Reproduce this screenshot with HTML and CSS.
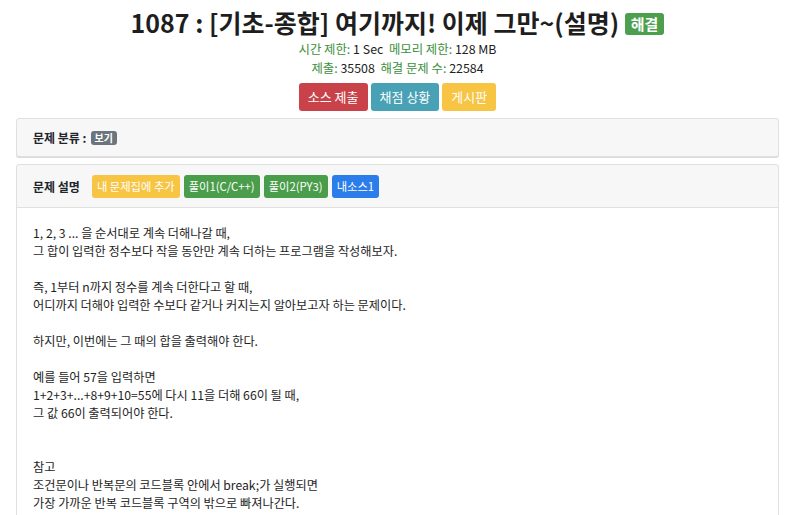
FILE: index.html
```html
<!DOCTYPE html>
<html>
	<head>
		<meta charset="UTF-8">
		<title>1087 : [기초-종합] 여기까지! 이제 그만~(설명)</title>
		<link rel="stylesheet" href="styles.css">
	</head>
	<body>
		<div class="wrap">
			<h1 class="title">1087 : [기초-종합] 여기까지! 이제 그만~(설명) <span class="solved">해결</span></h1>
			<p class="meta"><span class="lab">시간 제한:</span> 1 Sec &nbsp;<span class="lab">메모리 제한:</span> 128 MB</p>
			<p class="meta"><span class="lab">제출:</span> 35508 &nbsp;<span class="lab">해결 문제 수:</span> 22584</p>
			<div class="actions">
				<a href="javascript:;" class="btn red">소스 제출</a>
				<a href="javascript:;" class="btn teal">채점 상황</a>
				<a href="javascript:;" class="btn yellow">게시판</a>
			</div>

			<div class="card">
				<div class="card-head">
					<b>문제 분류 :</b> <span class="tag">보기</span>
				</div>
			</div>

			<div class="card">
				<div class="card-head line">
					<b>문제 설명</b>
					<a href="javascript:;" class="sbtn yellow">내 문제집에 추가</a>
					<a href="javascript:;" class="sbtn green">풀이1(C/C++)</a>
					<a href="javascript:;" class="sbtn green">풀이2(PY3)</a>
					<a href="javascript:;" class="sbtn blue">내소스1</a>
				</div>
				<div class="card-body">
					1, 2, 3 ... 을 순서대로 계속 더해나갈 때,<br>
					그 합이 입력한 정수보다 작을 동안만 계속 더하는 프로그램을 작성해보자.<br>
					<br>
					즉, 1부터 n까지 정수를 계속 더한다고 할 때,<br>
					어디까지 더해야 입력한 수보다 같거나 커지는지 알아보고자 하는 문제이다.<br>
					<br>
					하지만, 이번에는 그 때의 합을 출력해야 한다.<br>
					<br>
					예를 들어 57을 입력하면<br>
					1+2+3+...+8+9+10=55에 다시 11을 더해 66이 될 때,<br>
					그 값 66이 출력되어야 한다.<br>
					<br>
					<br>
					참고<br>
					조건문이나 반복문의 코드블록 안에서 break;가 실행되면<br>
					가장 가까운 반복 코드블록 구역의 밖으로 빠져나간다.
				</div>
			</div>
		</div>
	</body>
</html>
```

FILE: styles.css
```css
*{ margin: 0; padding: 0; box-sizing: border-box;}
body{ background: #fff; color: #212529; font-family: "Noto Sans CJK KR", "Noto Sans", sans-serif; font-size: 12px;}
a{ text-decoration: none;}
.wrap{ width: 763px; margin-left: 16px; padding-top: 4px;}
.title{ text-align: center; font-size: 25px; font-weight: 700; line-height: 36px; color: #1e1e1e;}
.solved{ display: inline-block; vertical-align: 3px; background: #4c9f4c; color: #fff; font-size: 15px; line-height: 22px; padding: 0 6px; border-radius: 3px;}
.meta{ text-align: center; font-size: 12.4px; line-height: 19px; color: #222;}
.meta .lab{ color: #3c903c;}
.actions{ display: flex; justify-content: center; gap: 3px; margin-top: 5px;}
.btn{ display: block; height: 28px; line-height: 28px; padding: 0 9px; border-radius: 3px; color: #fff; font-size: 13px;}
.red{ background: #c9424a;}
.teal{ background: #48a1b5;}
.yellow{ background: #f7c443;}
.green{ background: #4a9d4a;}
.blue{ background: #2b7de9;}
.card{ border: 1px solid #e0e0e0; border-radius: 3px; background: #f7f7f7; margin-top: 7px; box-shadow: 0 1px 0 #dadada;}
.card-head{ display: flex; align-items: center; gap: 4px; height: 37px; padding: 0 16px; font-size: 12px;}
.card-head b{ font-weight: 700;}
.card-head.line{ height: 43px; border-bottom: 1px solid #e0e0e0;}
.card-head.line b{ margin-right: 8px;}
.tag{ display: inline-block; background: #6c757d; color: #fff; font-size: 10px; font-weight: 700; line-height: 14px; padding: 0 4px; border-radius: 3px;}
.sbtn{ display: block; height: 23px; line-height: 23px; padding: 0 5px; border-radius: 3px; color: #fff; font-size: 11.3px;}
.card-body{ background: #fff; padding: 16px 16px 20px; font-size: 12.2px; line-height: 18px; color: #1e1e1e;}
```
